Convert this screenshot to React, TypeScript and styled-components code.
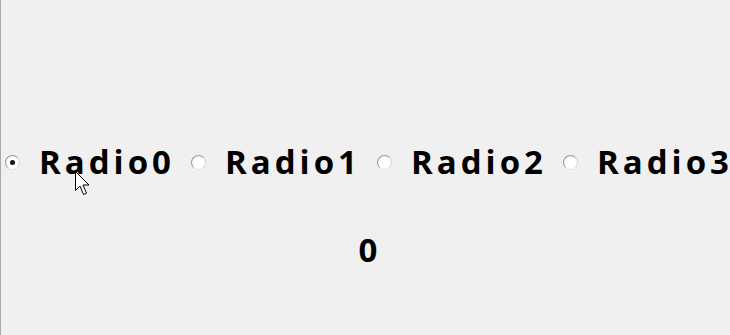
import React, { useState } from "react"
import styled, { createGlobalStyle } from 'styled-components'

const GlobalStyle = createGlobalStyle`
    html, body {
        margin: 0;
        padding: 0;
        background: #f0f0f0;
    }
`

const Window = styled.div`
    position: relative;
    width: 730px;
    height: 335px;
    box-sizing: border-box;
    border-left: 1px solid #a8a8a8;
    background: #f0f0f0;
    overflow: hidden;
    display: flex;
    flex-direction: column;
    padding-top: 143px;
    font-family: "Open Sans", "Noto Sans CJK SC", sans-serif;
    font-weight: 700;
    color: #000;
`

const Group = styled.div`
    display: flex;
    align-items: center;
    white-space: nowrap;
    padding-left: 4px;
`

const Option = styled.label`
    display: flex;
    align-items: center;
    width: 186px;
    flex-shrink: 0;
    cursor: default;
`

const Dot = styled.span<{ $on: boolean }>`
    position: relative;
    width: 15px;
    height: 15px;
    box-sizing: border-box;
    border-radius: 50%;
    border: 1px solid #9a9a9a;
    border-right-color: #d6d6d6;
    border-bottom-color: #e2e2e2;
    background: radial-gradient(circle at 60% 60%, #ffffff 55%, #ececec 100%);
    flex-shrink: 0;
    margin-right: 19px;
    margin-top: 1px;

    &::after {
        content: '';
        display: ${p => (p.$on ? 'block' : 'none')};
        position: absolute;
        left: 4px;
        top: 4px;
        width: 5px;
        height: 5px;
        border-radius: 50%;
        background: #111;
    }
`

const Label = styled.span`
    font-size: 33px;
    line-height: 38px;
    letter-spacing: 4px;
`

const Counter = styled.div`
    margin-top: 50px;
    text-align: center;
    font-size: 33px;
    line-height: 37px;
    padding-left: 5px;
`

const Cursor = styled.svg`
    position: absolute;
    left: 74px;
    top: 171px;
    width: 15px;
    height: 26px;
`

const items = ['Radio0', 'Radio1', 'Radio2', 'Radio3']

export default function App() {
    const [selected, setSelected] = useState(0)

    return (
        <>
            <GlobalStyle />
            <Window>
                <Group>
                    {items.map((name, i) => (
                        <Option key={name} onClick={() => setSelected(i)}>
                            <Dot $on={selected === i} />
                            <Label>{name}</Label>
                        </Option>
                    ))}
                </Group>
                <Counter>{selected}</Counter>
                <Cursor viewBox="0 0 15 26">
                    <path
                        d="M0.5 0.5 L0.5 19.5 L5 15 L8.5 23.5 L11.5 22.3 L8 14 L14 14 Z"
                        fill="#fff"
                        stroke="#000"
                        strokeWidth="1"
                        strokeLinejoin="miter"
                    />
                </Cursor>
            </Window>
        </>
    )
}
